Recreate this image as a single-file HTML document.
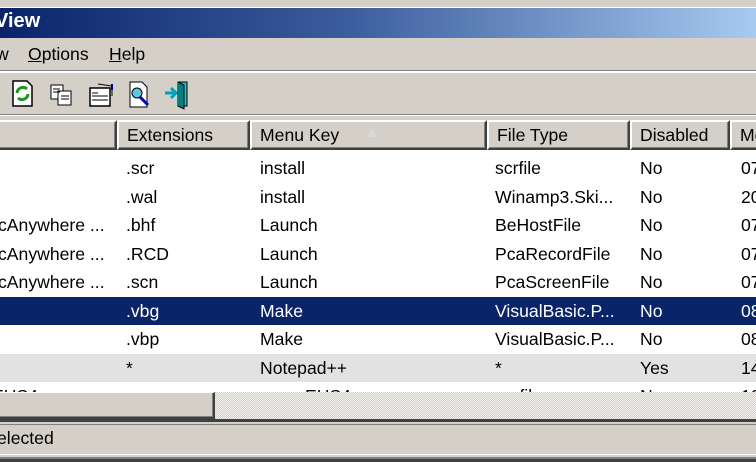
<!DOCTYPE html>
<html><head><meta charset="utf-8"><style>
*{margin:0;padding:0;box-sizing:border-box}
body{width:756px;height:462px;overflow:hidden;background:#d4d0c8;font-family:"Liberation Sans",sans-serif;font-size:17.6px;color:#000;position:relative}
.a{position:absolute;white-space:nowrap}
.row{position:absolute;left:0;width:756px;height:28.5px}
.row span{position:absolute;top:4px}
.hd{position:absolute;top:120px;height:30px;background:#d4d0c8;border-top:2px solid #fff;border-left:2px solid #fff;border-right:2px solid #404040;border-bottom:2px solid #404040;box-shadow:inset -1px -1px 0 #808080;padding:3px 0 0 8px}
</style></head><body>
<div class="a" style="left:0;top:0;width:756px;height:8px;background:#d4d0c8;border-bottom:1px solid #fff"></div>
<div class="a" style="left:0;top:8px;width:756px;height:30px;background:linear-gradient(to right,#0a246a,#3a5b9c 45%,#a6caf0)"></div>
<div class="a" style="left:-5px;top:10px;color:#fff;font-weight:bold;font-size:20px">View</div>
<div class="a" style="left:-4px;top:44px">w</div>
<div class="a" style="left:28px;top:44px"><u>O</u>ptions</div>
<div class="a" style="left:109px;top:44px"><u>H</u>elp</div>
<div class="a" style="left:0;top:70px;width:756px;height:1px;background:#808080"></div>
<div class="a" style="left:0;top:71px;width:756px;height:2px;background:#fff"></div>
<svg class="a" style="left:0;top:76px" width="200" height="34" viewBox="0 0 200 34">
<path d="M13 5h14l5 5v20H13z" fill="#fff" stroke="#000" stroke-width="1.5"/>
<path d="M17 17a6 6 0 0 1 10-4" stroke="#1a9a1a" stroke-width="3" fill="none"/><path d="M28 18a6 6 0 0 1-10 4" stroke="#1a9a1a" stroke-width="3" fill="none"/>
<rect x="51" y="9" width="12" height="14" fill="#fff" stroke="#000"/><rect x="58" y="15" width="13" height="14" fill="#fff" stroke="#000"/>
<path d="M53 13h7M53 16h7M61 20h8M61 23h8" stroke="#000"/>
<rect x="90" y="12" width="20" height="18" fill="#fff" stroke="#000" stroke-width="1.5"/>
<path d="M92 20h16M92 24h16M92 17h6" stroke="#000"/><path d="M98 8l14 2v10" stroke="#000" fill="none"/><path d="M112 8v6" stroke="#0000a0" stroke-width="2"/>
<path d="M130 6h12l5 5v20h-17z" fill="#fff" stroke="#000"/>
<circle cx="137" cy="17" r="5" fill="#5ac8e0" stroke="#000"/><path d="M140 21l8 8" stroke="#0000c0" stroke-width="3"/>
<path d="M165 17h10M171 12l5 5-5 5" stroke="#00a0c0" stroke-width="3" fill="none"/>
<path d="M178 6h9v24h-9z" fill="#20c0d0" stroke="#000"/><path d="M178 6l6 3v24l-6-3" fill="#008080" stroke="#000"/>
</svg>
<div class="a" style="left:0;top:114px;width:756px;height:1px;background:#808080"></div>
<div class="a" style="left:0;top:115px;width:756px;height:1px;background:#fff"></div>
<div class="a" style="left:0;top:150px;width:756px;height:242px;background:#fff"></div>
<div class="hd" style="left:-10px;width:127px"></div>
<div class="hd" style="left:117px;width:133px">Extensions</div>
<div class="hd" style="left:250px;width:237px">Menu Key<span style="position:absolute;left:112px;top:2px;color:#d8d8d8;font-size:16px">▲</span></div>
<div class="hd" style="left:487px;width:143px">File Type</div>
<div class="hd" style="left:630px;width:100px">Disabled</div>
<div class="hd" style="left:730px;width:40px">Mo</div>
<div class="row" style="top:154px"><span style="left:126px">.scr</span><span style="left:260px">install</span><span style="left:495px">scrfile</span><span style="left:640px">No</span><span style="left:741px">07</span></div>
<div class="row" style="top:182.5px"><span style="left:126px">.wal</span><span style="left:260px">install</span><span style="left:495px">Winamp3.Ski...</span><span style="left:640px">No</span><span style="left:741px">20</span></div>
<div class="row" style="top:211px"><span style="left:-2px">cAnywhere ...</span><span style="left:126px">.bhf</span><span style="left:260px">Launch</span><span style="left:495px">BeHostFile</span><span style="left:640px">No</span><span style="left:741px">07</span></div>
<div class="row" style="top:239.5px"><span style="left:-2px">cAnywhere ...</span><span style="left:126px">.RCD</span><span style="left:260px">Launch</span><span style="left:495px">PcaRecordFile</span><span style="left:640px">No</span><span style="left:741px">07</span></div>
<div class="row" style="top:268px"><span style="left:-2px">cAnywhere ...</span><span style="left:126px">.scn</span><span style="left:260px">Launch</span><span style="left:495px">PcaScreenFile</span><span style="left:640px">No</span><span style="left:741px">07</span></div>
<div class="row" style="top:296.5px;background:#0a246a;color:#fff"><span style="left:126px">.vbg</span><span style="left:260px">Make</span><span style="left:495px">VisualBasic.P...</span><span style="left:640px">No</span><span style="left:741px">08</span></div>
<div class="row" style="top:325px"><span style="left:126px">.vbp</span><span style="left:260px">Make</span><span style="left:495px">VisualBasic.P...</span><span style="left:640px">No</span><span style="left:741px">08</span></div>
<div class="row" style="top:353.5px;background:#e2e2e2"><span style="left:126px">*</span><span style="left:260px">Notepad++</span><span style="left:495px">*</span><span style="left:640px">Yes</span><span style="left:741px">14</span></div>
<div class="row" style="top:382px"><span style="left:-8px">EHS4</span><span style="left:305px">EHS4</span><span style="left:495px">ea.file</span><span style="left:640px">No</span><span style="left:741px">10</span></div>
<div class="a" style="left:0;top:392px;width:756px;height:27px;background:repeating-conic-gradient(#d4d0c8 0 25%,#f4f2ee 0 50%) 0 0/2px 2px"></div>
<div class="a" style="left:-3px;top:392px;width:218px;height:27px;background:#d4d0c8;border-top:1px solid #fff;border-right:2px solid #404040;border-bottom:2px solid #404040;box-shadow:inset -1px -1px 0 #808080"></div>
<div class="a" style="left:0;top:419px;width:756px;height:3px;background:#404040"></div>
<div class="a" style="left:0;top:424px;width:756px;height:31px;border-top:1px solid #808080;border-bottom:1px solid #fff"></div>
<div class="a" style="left:-3px;top:428px">elected</div>
<div class="a" style="left:0;top:457px;width:756px;height:2px;background:#808080"></div>
<div class="a" style="left:0;top:459px;width:756px;height:3px;background:#404040"></div>
</body></html>
